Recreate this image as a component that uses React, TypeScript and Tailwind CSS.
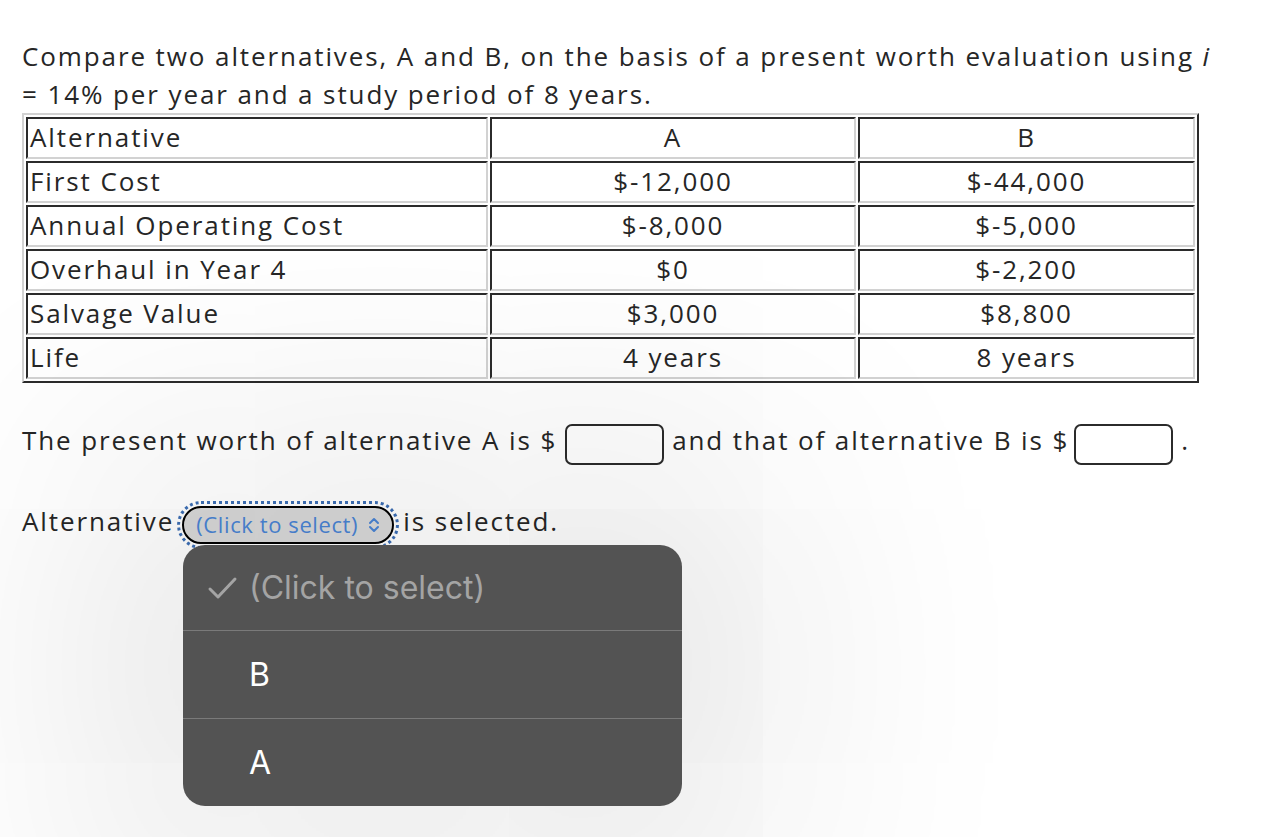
import React from "react";

const rows: [string, string, string][] = [
  ["First Cost", "$-12,000", "$-44,000"],
  ["Annual Operating Cost", "$-8,000", "$-5,000"],
  ["Overhaul in Year 4", "$0", "$-2,200"],
  ["Salvage Value", "$3,000", "$8,800"],
  ["Life", "4 years", "8 years"],
];

const cell =
  "h-[42px] p-0 border-2 border-solid border-t-[#2b2b2b] border-l-[#2b2b2b] border-b-[#d2d2d2] border-r-[#d2d2d2] align-middle";

function Box() {
  return <span className="block h-[41px] w-[99px] rounded-[7px] border-2 border-[#2b2b2b] bg-white" />;
}

export default function App() {
  return (
    <div
      className="relative h-[837px] w-[1270px] overflow-hidden bg-white"
      style={{ fontFamily: "'Open Sans', Lato, sans-serif" }}
    >
      <div className="pl-[22px] pt-[37px] text-[26px] leading-[38px] tracking-[1.9px] text-[#262626]">
        <p className="whitespace-nowrap">
          Compare two alternatives, A and B, on the basis of a present worth evaluation using <i>i</i>
          <br />= 14% per year and a study period of 8 years.
        </p>
        <table className="w-[1175px] table-fixed border-separate border-spacing-[2px] border-2 border-solid border-t-[#d2d2d2] border-l-[#d2d2d2] border-b-[#2b2b2b] border-r-[#2b2b2b] leading-[30px]">
          <colgroup>
            <col className="w-[462px]" />
            <col className="w-[366px]" />
            <col className="w-[337px]" />
          </colgroup>
          <tbody>
            <tr>
              <td className={`${cell} pb-[2px] pl-[2px] text-left`}>Alternative</td>
              <td className={`${cell} pb-[2px] text-center`}>A</td>
              <td className={`${cell} pb-[2px] text-center`}>B</td>
            </tr>
            {rows.map((r) => (
              <tr key={r[0]}>
                <td className={`${cell} pb-[2px] pl-[2px] text-left`}>{r[0]}</td>
                <td className={`${cell} pb-[2px] text-center`}>{r[1]}</td>
                <td className={`${cell} pb-[2px] text-center`}>{r[2]}</td>
              </tr>
            ))}
          </tbody>
        </table>

        <div className="mt-[41px] flex h-[41px] items-center whitespace-nowrap">
          <span className="pb-[10px]">The present worth of alternative A is $</span>
          <span className="ml-[8px]">
            <Box />
          </span>
          <span className="ml-[8px] pb-[10px]">and that of alternative B is $</span>
          <span className="ml-[5px]">
            <Box />
          </span>
          <span className="ml-[8px] pb-[10px]">.</span>
        </div>

        <div className="mt-[37px] flex h-[46px] items-center whitespace-nowrap">
          <span className="pb-[8px]">Alternative</span>
          <span className="ml-[8px] rounded-full outline-[3px] outline-dotted outline-[#3d6fb5] outline-offset-[2px]">
            <span className="flex h-[38px] w-[212px] items-center justify-center gap-[10px] rounded-full border-2 border-black bg-[#d9d9d9] text-[22px] tracking-[0.6px] text-[#4a84d4]">
              <span className="pb-[2px]">(Click to select)</span>
              <svg width="12" height="16" viewBox="0 0 12 16" fill="none" stroke="#4a84d4" strokeWidth="2" strokeLinecap="round" strokeLinejoin="round">
                <polyline points="2,6 6,2 10,6" />
                <polyline points="2,10 6,14 10,10" />
              </svg>
            </span>
          </span>
          <span className="ml-[9px] pb-[8px]">is selected.</span>
        </div>
      </div>

      <div
        className="absolute left-[183px] top-[545px] w-[499px] overflow-hidden rounded-[22px] bg-[#535353] shadow-[0_0_260px_110px_rgba(0,0,0,0.09)]"
        style={{ fontFamily: "Inter, Roboto, sans-serif" }}
      >
        <div className="flex h-[86px] items-center border-b border-[#7a7a7a] pl-[23px] text-[32px] text-[#a4a4a4]">
          <svg width="32" height="28" viewBox="0 0 32 28" fill="none" stroke="#a4a4a4" strokeWidth="3" strokeLinecap="round" strokeLinejoin="round">
            <polyline points="4,15 12,23 29,5" />
          </svg>
          <span className="ml-[11px]">(Click to select)</span>
        </div>
        <div className="flex h-[88px] items-center border-b border-[#7a7a7a] pl-[66px] text-[32px] text-white">B</div>
        <div className="flex h-[87px] items-center pl-[66px] text-[32px] text-white">A</div>
      </div>
    </div>
  );
}
